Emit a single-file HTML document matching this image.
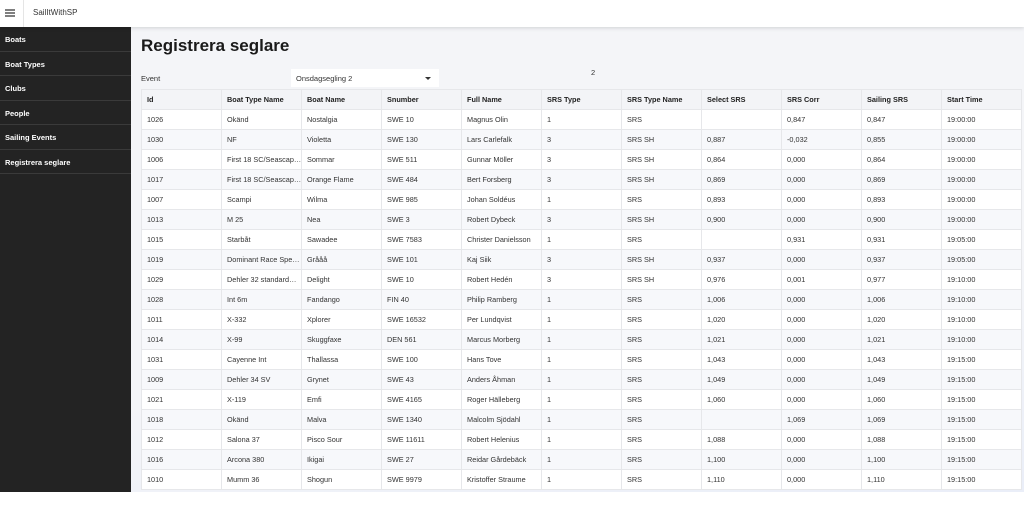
<!DOCTYPE html>
<html><head><meta charset="utf-8"><style>
*{margin:0;padding:0;box-sizing:border-box}
body{width:1024px;height:505px;overflow:hidden;background:#fff;font-family:"Liberation Sans",sans-serif;color:#222;position:relative}
.top{position:absolute;left:0;top:0;width:1024px;height:27px;background:#fff;box-shadow:0 1px 4px rgba(0,0,0,.15);z-index:2}
.top .div{position:absolute;left:23px;top:0;width:1px;height:27px;background:#e5e5e5}
.top .brand{position:absolute;left:33px;top:8px;font-size:8px;color:#333}
.side{position:absolute;left:0;top:27px;width:131px;height:465px;background:#232323}
.side div{height:24.5px;border-bottom:1px solid #3a3a3a;color:#fff;font-weight:bold;font-size:7.5px;padding:8px 0 0 5px}
.main{position:absolute;left:131px;top:27px;width:893px;height:465px;background:linear-gradient(170deg,#f4f5f8 60%,#eaeef8)}
h1{position:absolute;left:10px;top:9px;font-size:17px;font-weight:bold;color:#1a1a1a}
.ev{position:absolute;left:10px;top:47px;font-size:7.5px;color:#333}
.sel{position:absolute;left:160px;top:42px;width:148px;height:18px;background:#fff;font-size:7.5px;padding:5px 0 0 5px;color:#333}
.sel:after{content:"";position:absolute;right:8px;top:8px;border:3px solid transparent;border-top-color:#333;border-bottom:0}
.two{position:absolute;left:460px;top:41px;font-size:7.5px;color:#333}
table{position:absolute;left:10px;top:62px;border-collapse:collapse;table-layout:fixed;width:880px}
td,th{width:80px;height:20px;border:1px solid #e6e7ea;font-size:7.3px;text-align:left;padding:0 5px;white-space:nowrap;overflow:hidden;color:#333;font-weight:normal}
th{font-weight:bold;background:#f3f4f7;color:#222}
tr:nth-child(odd) td{background:#f7f8fb}
tr:nth-child(even) td{background:#fff}
</style></head><body>
<div class="top"><svg style="position:absolute;left:5px;top:9px" width="10" height="8"><path d="M0 1H10M0 4H10M0 7H10" stroke="#333" stroke-width="1.2"/></svg><div class="div"></div><div class="brand">SailItWithSP</div></div>
<div class="side"><div>Boats</div><div>Boat Types</div><div>Clubs</div><div>People</div><div>Sailing Events</div><div>Registrera seglare</div></div>
<div class="main">
<h1>Registrera seglare</h1>
<div class="ev">Event</div>
<div class="sel">Onsdagsegling 2</div>
<div class="two">2</div>
<table>
<tr><th>Id</th><th>Boat Type Name</th><th>Boat Name</th><th>Snumber</th><th>Full Name</th><th>SRS Type</th><th>SRS Type Name</th><th>Select SRS</th><th>SRS Corr</th><th>Sailing SRS</th><th>Start Time</th></tr>
<tr><td>1026</td><td>Okänd</td><td>Nostalgia</td><td>SWE 10</td><td>Magnus Olin</td><td>1</td><td>SRS</td><td></td><td>0,847</td><td>0,847</td><td>19:00:00</td></tr>
<tr><td>1030</td><td>NF</td><td>Violetta</td><td>SWE 130</td><td>Lars Carlefalk</td><td>3</td><td>SRS SH</td><td>0,887</td><td>-0,032</td><td>0,855</td><td>19:00:00</td></tr>
<tr><td>1006</td><td>First 18 SC/Seascap…</td><td>Sommar</td><td>SWE 511</td><td>Gunnar Möller</td><td>3</td><td>SRS SH</td><td>0,864</td><td>0,000</td><td>0,864</td><td>19:00:00</td></tr>
<tr><td>1017</td><td>First 18 SC/Seascap…</td><td>Orange Flame</td><td>SWE 484</td><td>Bert Forsberg</td><td>3</td><td>SRS SH</td><td>0,869</td><td>0,000</td><td>0,869</td><td>19:00:00</td></tr>
<tr><td>1007</td><td>Scampi</td><td>Wilma</td><td>SWE 985</td><td>Johan Soldéus</td><td>1</td><td>SRS</td><td>0,893</td><td>0,000</td><td>0,893</td><td>19:00:00</td></tr>
<tr><td>1013</td><td>M 25</td><td>Nea</td><td>SWE 3</td><td>Robert Dybeck</td><td>3</td><td>SRS SH</td><td>0,900</td><td>0,000</td><td>0,900</td><td>19:00:00</td></tr>
<tr><td>1015</td><td>Starbåt</td><td>Sawadee</td><td>SWE 7583</td><td>Christer Danielsson</td><td>1</td><td>SRS</td><td></td><td>0,931</td><td>0,931</td><td>19:05:00</td></tr>
<tr><td>1019</td><td>Dominant Race Spe…</td><td>Grååå</td><td>SWE 101</td><td>Kaj Siik</td><td>3</td><td>SRS SH</td><td>0,937</td><td>0,000</td><td>0,937</td><td>19:05:00</td></tr>
<tr><td>1029</td><td>Dehler 32 standard…</td><td>Delight</td><td>SWE 10</td><td>Robert Hedén</td><td>3</td><td>SRS SH</td><td>0,976</td><td>0,001</td><td>0,977</td><td>19:10:00</td></tr>
<tr><td>1028</td><td>Int 6m</td><td>Fandango</td><td>FIN 40</td><td>Philip Ramberg</td><td>1</td><td>SRS</td><td>1,006</td><td>0,000</td><td>1,006</td><td>19:10:00</td></tr>
<tr><td>1011</td><td>X-332</td><td>Xplorer</td><td>SWE 16532</td><td>Per Lundqvist</td><td>1</td><td>SRS</td><td>1,020</td><td>0,000</td><td>1,020</td><td>19:10:00</td></tr>
<tr><td>1014</td><td>X-99</td><td>Skuggfaxe</td><td>DEN 561</td><td>Marcus Morberg</td><td>1</td><td>SRS</td><td>1,021</td><td>0,000</td><td>1,021</td><td>19:10:00</td></tr>
<tr><td>1031</td><td>Cayenne Int</td><td>Thallassa</td><td>SWE 100</td><td>Hans Tove</td><td>1</td><td>SRS</td><td>1,043</td><td>0,000</td><td>1,043</td><td>19:15:00</td></tr>
<tr><td>1009</td><td>Dehler 34 SV</td><td>Grynet</td><td>SWE 43</td><td>Anders Åhman</td><td>1</td><td>SRS</td><td>1,049</td><td>0,000</td><td>1,049</td><td>19:15:00</td></tr>
<tr><td>1021</td><td>X-119</td><td>Emfi</td><td>SWE 4165</td><td>Roger Hälleberg</td><td>1</td><td>SRS</td><td>1,060</td><td>0,000</td><td>1,060</td><td>19:15:00</td></tr>
<tr><td>1018</td><td>Okänd</td><td>Malva</td><td>SWE 1340</td><td>Malcolm Sjödahl</td><td>1</td><td>SRS</td><td></td><td>1,069</td><td>1,069</td><td>19:15:00</td></tr>
<tr><td>1012</td><td>Salona 37</td><td>Pisco Sour</td><td>SWE 11611</td><td>Robert Helenius</td><td>1</td><td>SRS</td><td>1,088</td><td>0,000</td><td>1,088</td><td>19:15:00</td></tr>
<tr><td>1016</td><td>Arcona 380</td><td>Ikigai</td><td>SWE 27</td><td>Reidar Gårdebäck</td><td>1</td><td>SRS</td><td>1,100</td><td>0,000</td><td>1,100</td><td>19:15:00</td></tr>
<tr><td>1010</td><td>Mumm 36</td><td>Shogun</td><td>SWE 9979</td><td>Kristoffer Straume</td><td>1</td><td>SRS</td><td>1,110</td><td>0,000</td><td>1,110</td><td>19:15:00</td></tr>
</table>
</div>
</body></html>
